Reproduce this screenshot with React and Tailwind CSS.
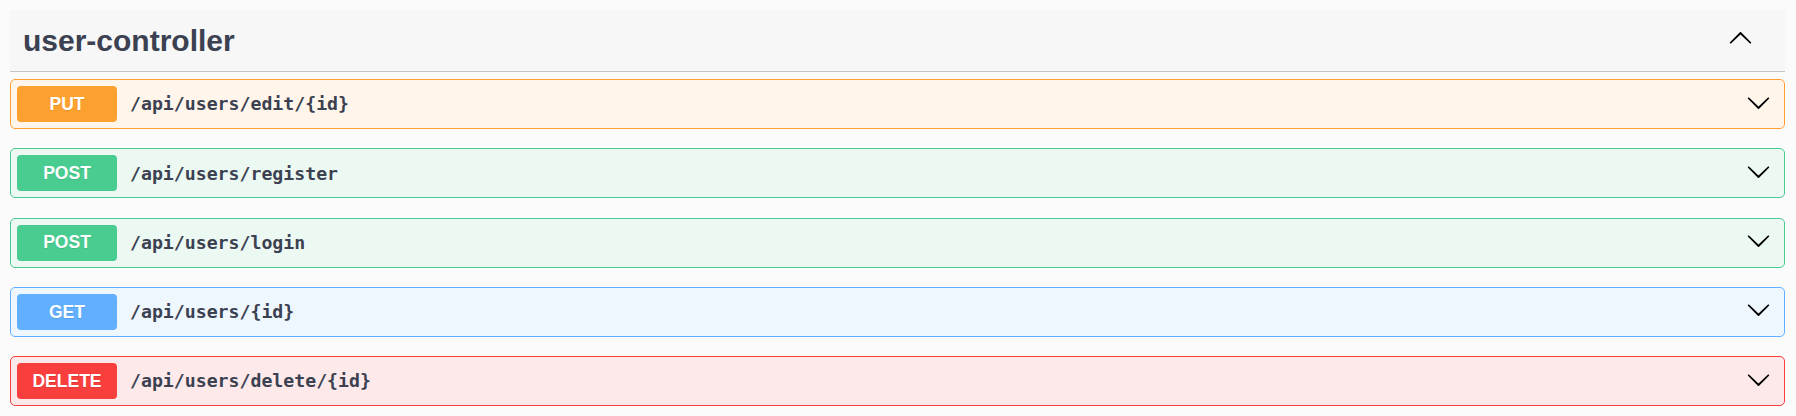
const ops = [
  { method: 'PUT', path: '/api/users/edit/{id}', badge: 'bg-[#fca130]', row: 'bg-[#fff5ea] border-[#fca130]' },
  { method: 'POST', path: '/api/users/register', badge: 'bg-[#49cc90]', row: 'bg-[#ecf9f2] border-[#49cc90]' },
  { method: 'POST', path: '/api/users/login', badge: 'bg-[#49cc90]', row: 'bg-[#ecf9f2] border-[#49cc90]' },
  { method: 'GET', path: '/api/users/{id}', badge: 'bg-[#61affe]', row: 'bg-[#eef6fe] border-[#61affe]' },
  { method: 'DELETE', path: '/api/users/delete/{id}', badge: 'bg-[#f93e3e]', row: 'bg-[#fde9e9] border-[#f93e3e]' },
]

function Chevron({ up = false }) {
  return (
    <svg width="25" height="25" viewBox="0 0 20 20" className={up ? 'rotate-180' : ''}>
      <path
        fill="#000"
        d="M17.418 6.109c.272-.268.709-.268.979 0s.271.701 0 .969l-7.908 7.83c-.27.268-.707.268-.979 0l-7.908-7.83c-.27-.268-.27-.701 0-.969.271-.268.709-.268.979 0L10 13.25l7.418-7.141z"
      />
    </svg>
  )
}

export default function App() {
  return (
    <div className="min-h-screen bg-[#fbfbfb] pt-[10px] pl-[10px] pr-[11px]">
      <div className="flex items-center h-[62px] bg-[#f7f7f7] border-b border-[#c4c5ca] pl-[13px] pr-[32px]">
        <h3 className="flex-1 text-[30px] font-bold text-[#3b4151] font-['Liberation_Sans',Arial,sans-serif]">user-controller</h3>
        <div className="mb-[4px]">
          <Chevron up />
        </div>
      </div>
      <div className="mt-[7px]">
        {ops.map((op, i) => (
          <div key={i} className={`flex items-center h-[50px] mb-[19.25px] border rounded-[5px] px-[6px] ${op.row}`}>
            <span className={`flex items-center justify-center w-[100px] h-[36px] rounded-[4px] text-white text-[17.5px] font-bold font-['Liberation_Sans',Arial,sans-serif] [text-shadow:0_1px_0_rgba(0,0,0,0.1)] ${op.badge}`}>
              {op.method}
            </span>
            <span className="flex-1 pl-[13px] text-[18.2px] font-bold text-[#3b4151] font-['DejaVu_Sans_Mono',monospace]">{op.path}</span>
            <div className="mr-[7px] mb-[4px]">
              <Chevron />
            </div>
          </div>
        ))}
      </div>
    </div>
  )
}
